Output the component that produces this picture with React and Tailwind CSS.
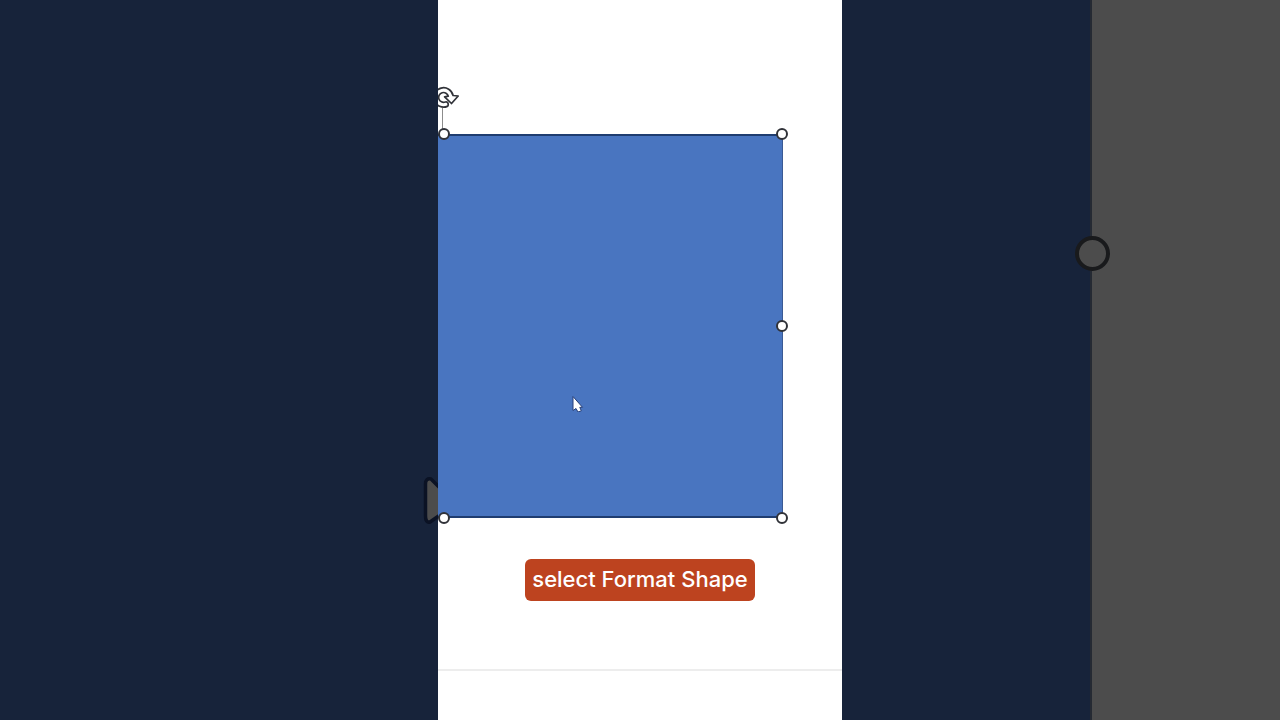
// Round grip on the selection outline.
function Handle({ className }) {
  return (
    <span
      className={`absolute size-3 rounded-full border-2 border-[#303238] bg-white ${className}`}
    />
  );
}

function RotateIcon() {
  return (
    <svg className="absolute -top-[50px] -left-1.5 h-6 w-7" viewBox="0 0 28 24">
      <path
        d="M15.3 20.4 A9.7 9.7 0 1 1 21.1 9.5 L26.2 10 L19.5 17.5 L12.6 10.8 L16.3 10.2 A4.9 4.9 0 1 0 13.3 16 Q15.2 15.4 16 17.2 Q16.7 19.6 15.3 20.4 Z"
        fill="#fff"
        stroke="#303238"
        strokeWidth="1.7"
        strokeLinejoin="round"
      />
    </svg>
  );
}

function Cursor() {
  return (
    <svg className="absolute top-64 left-33 h-5 w-4" viewBox="0 0 16 20">
      <path
        d="M3 4.500 V18.500 L6 16.500 L8 20 L11.300 18.800 L9.800 15.300 H12.500 Z"
        fill="#fff"
        stroke="#263f78"
        strokeWidth="1"
        strokeLinejoin="round"
      />
    </svg>
  );
}

function Shape() {
  return (
    <div className="relative mr-[59px] h-96 border-y-2 border-r border-y-[#1f3d70] border-r-[#3a5a94] bg-[#4975c0]">
      <span className="absolute -top-7 left-1 h-6 w-px bg-[#8c8c8c]" />
      <RotateIcon />
      <Handle className="-top-2 left-0" />
      <Handle className="-top-2 -right-1.5" />
      <Handle className="top-1/2 -right-1.5 -translate-y-1/2" />
      <Handle className="-bottom-2 left-0" />
      <Handle className="-right-1.5 -bottom-2" />
      <Cursor />
    </div>
  );
}

export default function App() {
  return (
    <div className="flex min-h-screen overflow-hidden bg-[#17233a] font-['Inter',sans-serif]">
      {/* dimmed backdrop, left of the video */}
      <div className="relative flex-1 overflow-hidden">
        <svg className="absolute top-[474px] right-0 h-[52px] w-4" viewBox="0 0 16 52">
          <path
            d="M18 14 L9 5 Q3.5 4 3.5 10 V42 Q3.5 49 8 48 L18 41"
            fill="#4c4c4c"
            stroke="#0b1224"
            strokeWidth="3.5"
          />
        </svg>
      </div>

      <main className="flex w-[404px] shrink-0 flex-col overflow-hidden bg-white pt-[134px]">
        <Shape />
        <p className="mt-[41px] self-center rounded-md bg-[#bd431f] px-[7px] pt-[3px] pb-[5px] text-[22px] leading-[34px] font-medium whitespace-nowrap text-white">
          select Format Shape
        </p>
        <hr className="mt-[68px] border-t-2 border-[#ededed]" />
      </main>

      {/* dimmed backdrop, right of the video */}
      <div className="flex flex-1">
        <div className="w-[248px] shrink-0" />
        <div className="relative flex-1 border-l-2 border-[#252a33] bg-[#4c4c4c]">
          <span className="absolute top-[236px] -left-[17px] size-[35px] rounded-full border-4 border-[#191a1c] bg-[#4c4c4c]" />
        </div>
      </div>
    </div>
  );
}
